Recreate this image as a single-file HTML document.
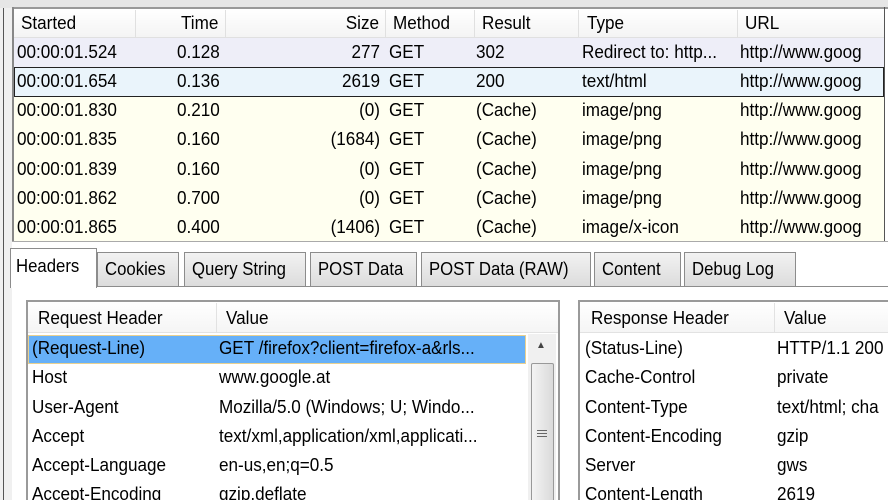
<!DOCTYPE html>
<html><head><meta charset="utf-8"><style>
*{margin:0;padding:0;box-sizing:border-box}
html,body{width:888px;height:500px;overflow:hidden}
body{background:#fff;font-family:"Liberation Sans",sans-serif;font-size:18px;color:#000;position:relative}
.a{position:absolute;white-space:nowrap}
.t{position:absolute;white-space:nowrap;transform:scaleX(0.95);transform-origin:left center}
.r{transform-origin:right center;text-align:right}
.tab{position:absolute;top:252px;height:34px;border:1px solid #8c8c8c;border-bottom:none;background:linear-gradient(#f2f2f2,#dcdcdc);padding:6px 0 0 7px}
.tab span{display:inline-block;transform:scaleX(0.93);transform-origin:left center}
</style></head><body>
<div class="a" style="left:0;top:0;width:12px;height:500px;background:#f0f0f0"></div>
<div class="a" style="left:3px;top:0;width:1px;height:500px;background:#555"></div>
<div class="a" style="left:0;top:0;width:888px;height:8px;background:#e6e6e6"></div>
<div class="a" style="left:12px;top:7px;width:876px;height:2px;background:#999"></div>
<div class="a" style="left:12px;top:7px;width:2px;height:236px;background:#888"></div>
<div class="a" style="left:884px;top:7px;width:1px;height:236px;background:#555"></div>
<div class="a" style="left:14px;top:9px;width:870px;height:29px;background:linear-gradient(#fff,#f4f4f4);border-bottom:1px solid #e0e0e0"></div>
<div class="a" style="left:135px;top:10px;width:1px;height:28px;background:#e0e0e0"></div>
<div class="a" style="left:225px;top:10px;width:1px;height:28px;background:#e0e0e0"></div>
<div class="a" style="left:385px;top:10px;width:1px;height:28px;background:#e0e0e0"></div>
<div class="a" style="left:474px;top:10px;width:1px;height:28px;background:#e0e0e0"></div>
<div class="a" style="left:578px;top:10px;width:1px;height:28px;background:#e0e0e0"></div>
<div class="a" style="left:737px;top:10px;width:1px;height:28px;background:#e0e0e0"></div>
<div class="t" style="left:21px;top:13px">Started</div>
<div class="t r" style="right:670px;top:13px">Time</div>
<div class="t r" style="right:509px;top:13px">Size</div>
<div class="t" style="left:393px;top:13px">Method</div>
<div class="t" style="left:482px;top:13px">Result</div>
<div class="t" style="left:587px;top:13px">Type</div>
<div class="t" style="left:745px;top:13px">URL</div>
<div class="a" style="left:14px;top:38px;width:870px;height:29px;background:#eeeef8"></div>
<div class="a" style="left:14px;top:67px;width:870px;height:30px;background:#eaf4fb;border:1px solid #222"></div>
<div class="a" style="left:14px;top:97px;width:870px;height:145px;background:#fffff0"></div>

<div class="t" style="left:17px;top:42px">00:00:01.524</div><div class="t" style="left:177px;top:42px">0.128</div><div class="t r" style="right:508px;top:42px">277</div><div class="t" style="left:389px;top:42px">GET</div><div class="t" style="left:476px;top:42px">302</div><div class="t" style="left:582px;top:42px">Redirect to: http...</div><div class="t" style="left:740px;top:42px">http://www.goog</div>
<div class="t" style="left:17px;top:71px">00:00:01.654</div><div class="t" style="left:177px;top:71px">0.136</div><div class="t r" style="right:508px;top:71px">2619</div><div class="t" style="left:389px;top:71px">GET</div><div class="t" style="left:476px;top:71px">200</div><div class="t" style="left:582px;top:71px">text/html</div><div class="t" style="left:740px;top:71px">http://www.goog</div>
<div class="t" style="left:17px;top:100px">00:00:01.830</div><div class="t" style="left:177px;top:100px">0.210</div><div class="t r" style="right:508px;top:100px">(0)</div><div class="t" style="left:389px;top:100px">GET</div><div class="t" style="left:476px;top:100px">(Cache)</div><div class="t" style="left:582px;top:100px">image/png</div><div class="t" style="left:740px;top:100px">http://www.goog</div>
<div class="t" style="left:17px;top:129px">00:00:01.835</div><div class="t" style="left:177px;top:129px">0.160</div><div class="t r" style="right:508px;top:129px">(1684)</div><div class="t" style="left:389px;top:129px">GET</div><div class="t" style="left:476px;top:129px">(Cache)</div><div class="t" style="left:582px;top:129px">image/png</div><div class="t" style="left:740px;top:129px">http://www.goog</div>
<div class="t" style="left:17px;top:159px">00:00:01.839</div><div class="t" style="left:177px;top:159px">0.160</div><div class="t r" style="right:508px;top:159px">(0)</div><div class="t" style="left:389px;top:159px">GET</div><div class="t" style="left:476px;top:159px">(Cache)</div><div class="t" style="left:582px;top:159px">image/png</div><div class="t" style="left:740px;top:159px">http://www.goog</div>
<div class="t" style="left:17px;top:188px">00:00:01.862</div><div class="t" style="left:177px;top:188px">0.700</div><div class="t r" style="right:508px;top:188px">(0)</div><div class="t" style="left:389px;top:188px">GET</div><div class="t" style="left:476px;top:188px">(Cache)</div><div class="t" style="left:582px;top:188px">image/png</div><div class="t" style="left:740px;top:188px">http://www.goog</div>
<div class="t" style="left:17px;top:217px">00:00:01.865</div><div class="t" style="left:177px;top:217px">0.400</div><div class="t r" style="right:508px;top:217px">(1406)</div><div class="t" style="left:389px;top:217px">GET</div><div class="t" style="left:476px;top:217px">(Cache)</div><div class="t" style="left:582px;top:217px">image/x-icon</div><div class="t" style="left:740px;top:217px">http://www.goog</div>

<div class="a" style="left:12px;top:241px;width:876px;height:1px;background:#aaa"></div>
<div class="a" style="left:12px;top:242px;width:876px;height:4px;background:#fff"></div>
<div class="a" style="left:10px;top:286px;width:878px;height:1px;background:#8c8c8c"></div>
<div class="tab" style="left:97px;width:82px"><span>Cookies</span></div>
<div class="tab" style="left:184px;width:122px"><span>Query String</span></div>
<div class="tab" style="left:310px;width:107px"><span>POST Data</span></div>
<div class="tab" style="left:421px;width:170px"><span>POST Data (RAW)</span></div>
<div class="tab" style="left:594px;width:87px"><span>Content</span></div>
<div class="tab" style="left:684px;width:112px"><span>Debug Log</span></div>
<div class="tab" style="left:10px;top:248px;width:87px;height:40px;background:#fff;padding-top:7px;padding-left:5px"><span>Headers</span></div>

<div class="a" style="left:26px;top:300px;width:534px;height:210px;border:2px solid #9a9a9a;border-bottom:none;background:#fff"></div>
<div class="a" style="left:28px;top:302px;width:530px;height:31px;background:linear-gradient(#fff,#f5f5f5);border-bottom:1px solid #e2e2e2"></div>
<div class="a" style="left:216px;top:303px;width:1px;height:30px;background:#e2e2e2"></div>
<div class="t" style="left:38px;top:308px">Request Header</div>
<div class="t" style="left:226px;top:308px">Value</div>
<div class="a" style="left:28px;top:335px;width:498px;height:29px;background:#66b0f8;border:1px solid #e8d090"></div>
<div class="t" style="left:32px;top:338px">(Request-Line)</div><div class="t" style="left:219px;top:338px">GET /firefox?client=firefox-a&amp;rls...</div>
<div class="t" style="left:32px;top:367px">Host</div><div class="t" style="left:219px;top:367px">www.google.at</div>
<div class="t" style="left:32px;top:397px">User-Agent</div><div class="t" style="left:219px;top:397px">Mozilla/5.0 (Windows; U; Windo...</div>
<div class="t" style="left:32px;top:426px">Accept</div><div class="t" style="left:219px;top:426px">text/xml,application/xml,applicati...</div>
<div class="t" style="left:32px;top:455px">Accept-Language</div><div class="t" style="left:219px;top:455px">en-us,en;q=0.5</div>
<div class="t" style="left:32px;top:484px">Accept-Encoding</div><div class="t" style="left:219px;top:484px">gzip,deflate</div>
<div class="a" style="left:528px;top:334px;width:28px;height:170px;background:#f0f0f0"></div>
<div class="a" style="left:536px;top:340px;font-size:10px;color:#444">▲</div>
<div class="a" style="left:531px;top:363px;width:23px;height:140px;border:1px solid #999;border-radius:2px;background:linear-gradient(90deg,#f4f4f4,#dadada)"></div>
<div class="a" style="left:537px;top:430px;width:10px;height:1px;background:#666;box-shadow:0 3px 0 #666,0 6px 0 #666"></div>

<div class="a" style="left:578px;top:300px;width:320px;height:210px;border:2px solid #9a9a9a;border-bottom:none;border-right:none;background:#fff"></div>
<div class="a" style="left:580px;top:302px;width:308px;height:31px;background:linear-gradient(#fff,#f5f5f5);border-bottom:1px solid #e2e2e2"></div>
<div class="a" style="left:774px;top:303px;width:1px;height:30px;background:#e2e2e2"></div>
<div class="t" style="left:591px;top:308px">Response Header</div>
<div class="t" style="left:784px;top:308px">Value</div>
<div class="t" style="left:585px;top:338px">(Status-Line)</div><div class="t" style="left:777px;top:338px">HTTP/1.1 200</div>
<div class="t" style="left:585px;top:367px">Cache-Control</div><div class="t" style="left:777px;top:367px">private</div>
<div class="t" style="left:585px;top:397px">Content-Type</div><div class="t" style="left:777px;top:397px">text/html; cha</div>
<div class="t" style="left:585px;top:426px">Content-Encoding</div><div class="t" style="left:777px;top:426px">gzip</div>
<div class="t" style="left:585px;top:455px">Server</div><div class="t" style="left:777px;top:455px">gws</div>
<div class="t" style="left:585px;top:484px">Content-Length</div><div class="t" style="left:777px;top:484px">2619</div>
</body></html>
